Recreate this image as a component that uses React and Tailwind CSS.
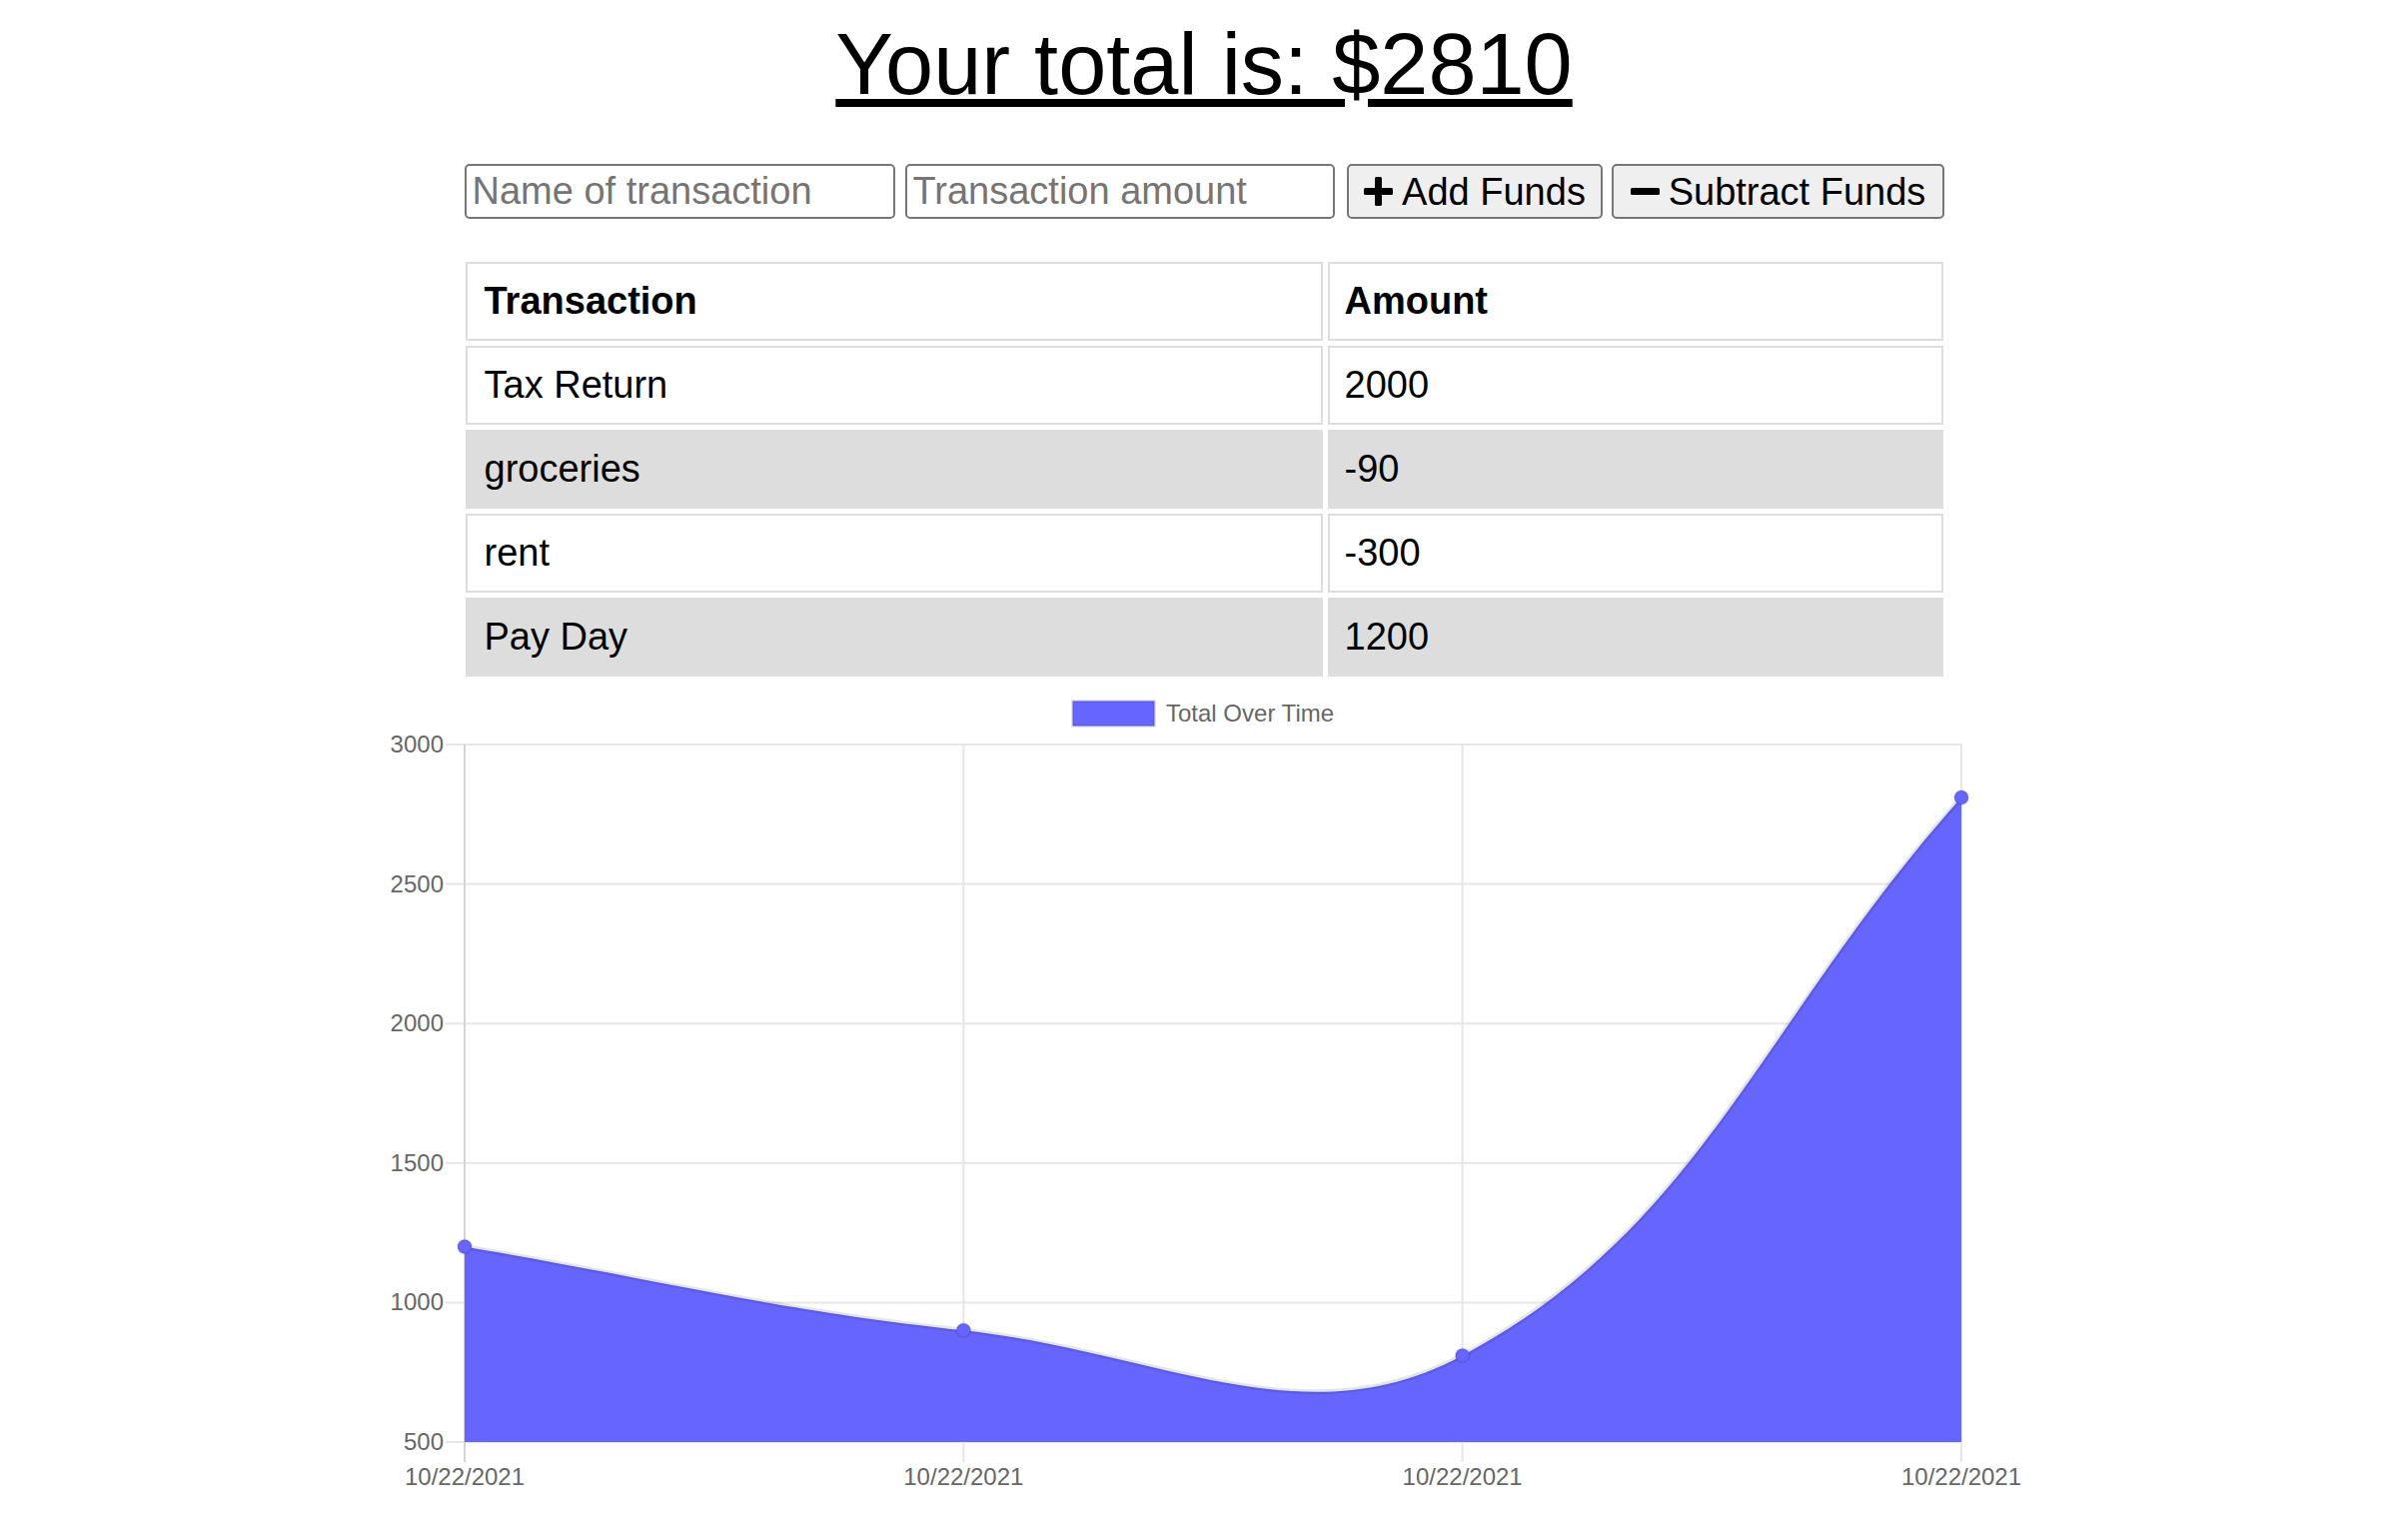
import React from 'react';

const rows = [
  { name: 'Tax Return', amount: '2000' },
  { name: 'groceries', amount: '-90' },
  { name: 'rent', amount: '-300' },
  { name: 'Pay Day', amount: '1200' },
];

// chart area in page pixels
const LEFT = 465;
const RIGHT = 1963;
const TOP = 745;
const BOTTOM = 1443;
const MIN = 500;
const MAX = 3000;
const values = [1200, 900, 810, 2810];
const FONT = "'Liberation Sans', Arial, sans-serif";

const yOf = (v) => BOTTOM - ((v - MIN) / (MAX - MIN)) * (BOTTOM - TOP);
const xOf = (i) => LEFT + (i * (RIGHT - LEFT)) / (values.length - 1);

// same spline as chart.js (tension 0.4, capped to the chart area)
const buildPath = () => {
  const pts = values.map((v, i) => ({ x: xOf(i), y: yOf(v) }));
  const clamp = (p) => ({
    x: Math.min(RIGHT, Math.max(LEFT, p.x)),
    y: Math.min(BOTTOM, Math.max(TOP, p.y)),
  });
  const ctrl = pts.map((p, i) => {
    const prev = pts[i - 1] || p;
    const next = pts[i + 1] || p;
    const d01 = Math.hypot(p.x - prev.x, p.y - prev.y);
    const d12 = Math.hypot(next.x - p.x, next.y - p.y);
    const s01 = d01 / (d01 + d12) || 0;
    const s12 = d12 / (d01 + d12) || 0;
    const fa = 0.4 * s01;
    const fb = 0.4 * s12;
    return {
      prev: clamp({ x: p.x - fa * (next.x - prev.x), y: p.y - fa * (next.y - prev.y) }),
      next: clamp({ x: p.x + fb * (next.x - prev.x), y: p.y + fb * (next.y - prev.y) }),
    };
  });
  let d = `M ${pts[0].x} ${pts[0].y}`;
  for (let i = 1; i < pts.length; i++) {
    const a = ctrl[i - 1].next;
    const b = ctrl[i].prev;
    d += ` C ${a.x} ${a.y} ${b.x} ${b.y} ${pts[i].x} ${pts[i].y}`;
  }
  return { d, pts };
};

const Chart = () => {
  const { d, pts } = buildPath();
  const ticks = [3000, 2500, 2000, 1500, 1000, 500];
  return (
    <svg width="2410" height="841" viewBox="0 680 2410 841" className="block">
      <rect x="1073.5" y="701.5" width="82" height="25" fill="#6666ff" stroke="rgba(0,0,0,0.1)" strokeWidth="3" />
      <text x="1167" y="722" fontSize="24" fill="#666" fontFamily={FONT}>Total Over Time</text>

      {ticks.map((t) => (
        <g key={t}>
          <line x1="446" x2={RIGHT} y1={yOf(t)} y2={yOf(t)} stroke="#e6e6e6" strokeWidth="2" />
          <text x="444" y={yOf(t) + 8} fontSize="24" fill="#666" textAnchor="end" fontFamily={FONT}>{t}</text>
        </g>
      ))}
      {values.map((_, i) => (
        <g key={i}>
          <line x1={xOf(i)} x2={xOf(i)} y1={TOP} y2="1463" stroke={i === 0 ? '#d4d4d4' : '#e6e6e6'} strokeWidth="2" />
          <text x={xOf(i)} y="1486" fontSize="24" fill="#666" textAnchor="middle" fontFamily={FONT}>10/22/2021</text>
        </g>
      ))}

      <path d={`${d} L ${RIGHT} ${BOTTOM} L ${LEFT} ${BOTTOM} Z`} fill="#6666ff" />
      <path d={d} fill="none" stroke="rgba(0,0,0,0.1)" strokeWidth="5" />
      {pts.map((p, i) => (
        <circle key={i} cx={p.x} cy={p.y} r="7" fill="#6666ff" stroke="rgba(0,0,0,0.1)" strokeWidth="2" />
      ))}
    </svg>
  );
};

const PlusIcon = () => (
  <svg width="31" height="31" viewBox="0 0 31 31" className="shrink-0">
    <rect x="12" y="1" width="7" height="29" rx="1.5" fill="#000" />
    <rect x="1" y="12" width="29" height="7" rx="1.5" fill="#000" />
  </svg>
);

const MinusIcon = () => (
  <svg width="31" height="31" viewBox="0 0 31 31" className="shrink-0">
    <rect x="1" y="12" width="29" height="7" rx="1.5" fill="#000" />
  </svg>
);

const App = () => {
  return (
    <div className="w-full bg-white font-['Liberation_Sans',Arial,sans-serif] text-black">
      <div className="flex flex-col items-center">
        <h1 className="mt-[15px] h-[99px] text-[86.5px] leading-[99px] font-normal underline">
          Your total is: $2810
        </h1>

        <div className="mt-[50px] flex h-[55px] items-stretch text-[38px]">
          <input
            type="text"
            placeholder="Name of transaction"
            className="w-[431px] rounded-[5px] border-2 border-[#767676] bg-white pl-[6px] text-[38px] placeholder:text-[#757575] outline-none"
          />
          <input
            type="text"
            placeholder="Transaction amount"
            className="ml-[10px] w-[430px] rounded-[5px] border-2 border-[#767676] bg-white pl-[6px] text-[38px] placeholder:text-[#757575] outline-none"
          />
          <button className="ml-[12px] flex w-[256px] items-center justify-center gap-[8px] rounded-[5px] border-2 border-[#767676] bg-[#efefef] leading-none">
            <PlusIcon /> Add Funds
          </button>
          <button className="ml-[9px] flex w-[333px] items-center justify-center gap-[8px] rounded-[5px] border-2 border-[#767676] bg-[#efefef] leading-none">
            <MinusIcon /> Subtract Funds
          </button>
        </div>

        <div className="mt-[43px] grid grid-cols-[858px_616px] gap-[5px] text-[38px]">
          <div className="flex h-[79px] items-center border-2 border-[#dddddd] pl-[17px] font-bold">Transaction</div>
          <div className="flex h-[79px] items-center border-2 border-[#dddddd] pl-[15px] font-bold">Amount</div>
          {rows.map((r, i) => (
            <React.Fragment key={r.name}>
              <div className={`flex h-[79px] items-center border-2 border-[#dddddd] pl-[17px] ${i % 2 === 1 ? 'bg-[#dddddd]' : 'bg-white'}`}>
                {r.name}
              </div>
              <div className={`flex h-[79px] items-center border-2 border-[#dddddd] pl-[15px] ${i % 2 === 1 ? 'bg-[#dddddd]' : 'bg-white'}`}>
                {r.amount}
              </div>
            </React.Fragment>
          ))}
        </div>

        <div className="mt-[3px] w-full">
          <Chart />
        </div>
      </div>
    </div>
  );
};

export default App;
